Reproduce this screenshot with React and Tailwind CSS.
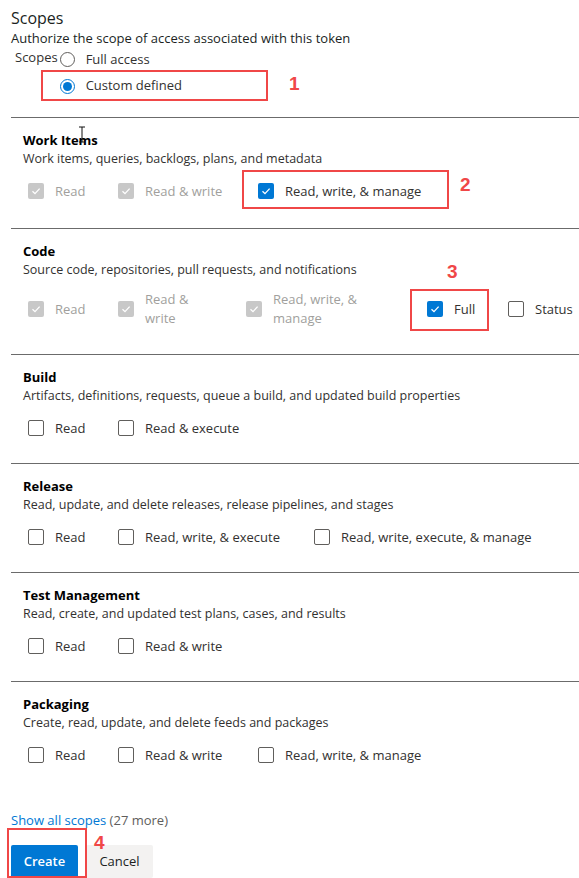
import { useState } from "react";

const font = { fontFamily: '"Segoe UI", "Open Sans", "Noto Sans", sans-serif' };

const Check = ({ state }) => {
    if (state === "off") {
        return <span className="w-4 h-4 shrink-0 rounded-[2px] border border-[#605e5c] bg-white" />;
    }
    const bg = state === "on" ? "bg-[#0078d4]" : "bg-[#c8c8c8]";
    return (
        <span className={`w-4 h-4 shrink-0 rounded-[2px] ${bg} flex items-center justify-center`}>
            <svg width="10" height="10" viewBox="0 0 10 10" fill="none">
                <path d="M1.5 5.2 L4 7.6 L8.6 2.6" stroke="white" strokeWidth="1.3" />
            </svg>
        </span>
    );
};

const Option = ({ label, state = "off", width, lines }) => {
    const disabled = state === "disabled";
    return (
        <div className={`flex items-center gap-[11px] pl-[5px] ${width}`}>
            <Check state={state} />
            <span className={`text-[13px] leading-[19px] ${disabled ? "text-[#a19f9d]" : "text-[#323130]"}`}>
                {lines ? lines.map((l, i) => <span key={i} className="block">{l}</span>) : label}
            </span>
        </div>
    );
};

const Section = ({ title, desc, children, height = "h-[109px]" }) => (
    <div className={`border-t border-[#6b6b6b] pl-[12px] ${height}`}>
        <div className="pt-[13px] text-[13px] font-bold leading-[19px] text-black">{title}</div>
        <div className="text-[12.5px] leading-[18px] text-[#323130]">{desc}</div>
        {children}
    </div>
);

const Marker = ({ n, className }) => (
    <span className={`absolute text-[19px] leading-[22px] font-bold text-[#f04747] ${className}`}
        style={{ fontFamily: '"Liberation Sans", Arial, sans-serif' }}>
        {n}
    </span>
);

const App = () => {
    const [scope] = useState("custom");

    return (
        <div className="w-[579px] h-[878px] overflow-hidden bg-white relative" style={font}>
            <div className="pl-[11px] pt-[7px]">
                <div className="text-[16px] leading-[22px] text-[#201f1e]">Scopes</div>
                <div className="text-[13px] leading-[18px] text-[#201f1e]">
                    Authorize the scope of access associated with this token
                </div>
                <div className="flex">
                    <span className="pl-[4px] text-[13px] leading-[18px] text-[#323130] pt-[1px]">Scopes</span>
                    <div className="ml-[2px] flex flex-col">
                        <div className="flex items-center gap-[11px] h-[21px] mt-[2px]">
                            <span className="w-[15px] h-[15px] rounded-full border border-[#605e5c] bg-white" />
                            <span className="text-[13px] text-[#323130]">Full access</span>
                        </div>
                        <div className="relative flex items-center gap-[11px] h-[26px] mt-[3px]">
                            <span className="w-[15px] h-[15px] rounded-full border border-[#0078d4] flex items-center justify-center">
                                {scope === "custom" && <span className="w-[9px] h-[9px] rounded-full bg-[#0078d4]" />}
                            </span>
                            <span className="text-[13px] text-[#323130]">Custom defined</span>
                            <span className="absolute left-[-19px] top-[-3px] w-[227px] h-[31px] border-2 border-[#f04747]" />
                        </div>
                    </div>
                </div>
            </div>
            <Marker n="1" className="left-[289px] top-[73px]" />

            <div className="ml-[11px] mt-[18px]">
                <Section title="Work Items" desc="Work items, queries, backlogs, plans, and metadata" height="h-[111px]">
                    <div className="flex mt-[12px] h-[22px] relative">
                        <Option label="Read" state="disabled" width="w-[90px]" />
                        <Option label="Read & write" state="disabled" width="w-[140px]" />
                        <Option label="Read, write, & manage" state="on" />
                        <span className="absolute left-[219px] top-[-10px] w-[207px] h-[39px] border-2 border-[#f04747]" />
                    </div>
                </Section>

                <Section title="Code" desc="Source code, repositories, pull requests, and notifications" height="h-[126px]">
                    <div className="flex mt-[11px] items-center relative">
                        <Option state="disabled" width="w-[90px]" lines={["Read"]} />
                        <Option state="disabled" width="w-[128px]" lines={["Read &", "write"]} />
                        <Option state="disabled" width="w-[181px]" lines={["Read, write, &", "manage"]} />
                        <Option state="on" width="w-[81px]" lines={["Full"]} />
                        <Option state="off" lines={["Status"]} />
                        <span className="absolute left-[387px] top-[-1px] w-[79px] h-[42px] border-2 border-[#f04747]" />
                    </div>
                </Section>

                <Section title="Build" desc="Artifacts, definitions, requests, queue a build, and updated build properties">
                    <div className="flex mt-[12px] h-[22px]">
                        <Option label="Read" width="w-[90px]" />
                        <Option label="Read & execute" />
                    </div>
                </Section>

                <Section title="Release" desc="Read, update, and delete releases, release pipelines, and stages">
                    <div className="flex mt-[12px] h-[22px]">
                        <Option label="Read" width="w-[90px]" />
                        <Option label="Read, write, & execute" width="w-[196px]" />
                        <Option label="Read, write, execute, & manage" />
                    </div>
                </Section>

                <Section title="Test Management" desc="Read, create, and updated test plans, cases, and results">
                    <div className="flex mt-[12px] h-[22px]">
                        <Option label="Read" width="w-[90px]" />
                        <Option label="Read & write" />
                    </div>
                </Section>

                <Section title="Packaging" desc="Create, read, update, and delete feeds and packages" height="h-[128px]">
                    <div className="flex mt-[12px] h-[22px]">
                        <Option label="Read" width="w-[90px]" />
                        <Option label="Read & write" width="w-[140px]" />
                        <Option label="Read, write, & manage" />
                    </div>
                </Section>
            </div>

            <div className="ml-[11px] mt-[2px] text-[13px] leading-[18px]">
                <span className="text-[#0078d4]">Show all scopes</span>
                <span className="text-[#605e5c]"> (27 more)</span>
            </div>

            <div className="ml-[11px] mt-[16px] flex gap-[8px] relative">
                <button className="w-[67px] h-[33px] bg-[#0078d4] text-white text-[13px] font-semibold rounded-[2px]">
                    Create
                </button>
                <button className="w-[67px] h-[33px] bg-[#f3f2f1] text-[#201f1e] text-[13px] rounded-[2px]">
                    Cancel
                </button>
                <span className="absolute left-[-4px] top-[-17px] w-[80px] h-[50px] border-2 border-[#f04747]" />
            </div>
            <Marker n="4" className="left-[94px] top-[832px]" />
            <Marker n="2" className="left-[460px] top-[174px]" />
            <Marker n="3" className="left-[447px] top-[261px]" />

            {/* text cursor left in the screenshot */}
            <svg className="absolute left-[78px] top-[126px]" width="8" height="17" viewBox="0 0 8 17" fill="none">
                <path d="M1 1 H7 M4 1 V16 M1 16 H7" stroke="#111" strokeWidth="1" />
            </svg>
        </div>
    );
};

export default App;
